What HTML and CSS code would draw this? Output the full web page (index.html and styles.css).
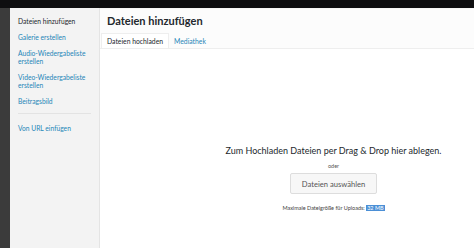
FILE: index.html
```html
<!DOCTYPE html>
<html lang="de">
<head>
<meta charset="utf-8">
<link rel="stylesheet" href="styles.css">
</head>
<body>
<div class="topbar"></div>
<div class="row">
  <div class="strip"></div>
  <div class="modal">
    <nav class="sidebar">
      <div class="item active">Dateien hinzufügen</div>
      <a class="item">Galerie erstellen</a>
      <a class="item">Audio-Wiedergabeliste erstellen</a>
      <a class="item">Video-Wiedergabeliste erstellen</a>
      <a class="item">Beitragsbild</a>
      <div class="sep"></div>
      <a class="item">Von URL einfügen</a>
    </nav>
    <main class="main">
      <header class="head">
        <h1 class="title">Dateien hinzufügen</h1>
        <div class="tabs">
          <span class="tab current">Dateien hochladen</span>
          <a class="tab">Mediathek</a>
        </div>
      </header>
      <section class="upload">
        <p class="drop">Zum Hochladen Dateien per Drag &amp; Drop hier ablegen.</p>
        <p class="or">oder</p>
        <button class="btn">Dateien auswählen</button>
        <p class="max">Maximale Dateigröße für Uploads: <span class="sel">32 MB</span></p>
      </section>
    </main>
  </div>
</div>
</body>
</html>
```
FILE: styles.css
```css
html, body { margin: 0; padding: 0; }
body {
  width: 474px; height: 248px; overflow: hidden;
  background: #3a3a3a;
  font-family: "Lato", "Open Sans", sans-serif;
  color: #23282d;
}
.topbar { height: 8px; background: #0e0e10; }
.row { display: flex; height: 240px; }
.strip { width: 10px; background: #3b3b3b; flex: none; }
.modal { flex: 1; display: flex; background: #fff; }
.sidebar {
  width: 90px; flex: none; box-sizing: border-box;
  background: #f3f3f3; border-right: 1px solid #e4e4e4;
  padding: 5px 0 0 8px; display: flex; flex-direction: column;
}
.item {
  font-size: 6.7px; line-height: 8px; color: #1f86b8;
  padding: 4px 4px 4px 0; display: block;
}
.item.active { color: #23282d; }
.sep { height: 1px; background: #e3e3e3; margin: 4px 8px 6px 0; }
.main { flex: 1; display: flex; flex-direction: column; }
.head { background: #fcfcfc; border-bottom: 1px solid #eee; border-top: 1px solid #f6f6f6; }
.title { margin: 0; font-size: 11px; font-weight: 700; padding: 3px 7px 4px; line-height: 17px; }
.tabs { display: flex; align-items: flex-end; padding-left: 1px; }
.tab { font-size: 6.8px; line-height: 14px; padding: 0 5px; color: #1f86b8; }
.tab.current { background: #fff; color: #23282d; border: 1px solid #eee; border-bottom: 0; }
.upload { flex: 1; display: flex; flex-direction: column; align-items: center; padding: 96px 0 0 93px; }
.drop { margin: 0; font-size: 9px; line-height: 12px; color: #23282d; }
.or { margin: 6px 0 0; font-size: 5.5px; line-height: 6px; color: #555; }
.btn {
  margin-top: 4px; width: 87px; height: 21px; font: inherit; font-size: 7.6px; color: #555;
  background: #f7f7f7; border: 1px solid #ddd; border-radius: 2px;
}
.max { margin: 11px 0 0; font-size: 5.5px; line-height: 7px; color: #444; }
.sel { background: #4b8fd6; color: #fff; padding: 0 1px; }
```
